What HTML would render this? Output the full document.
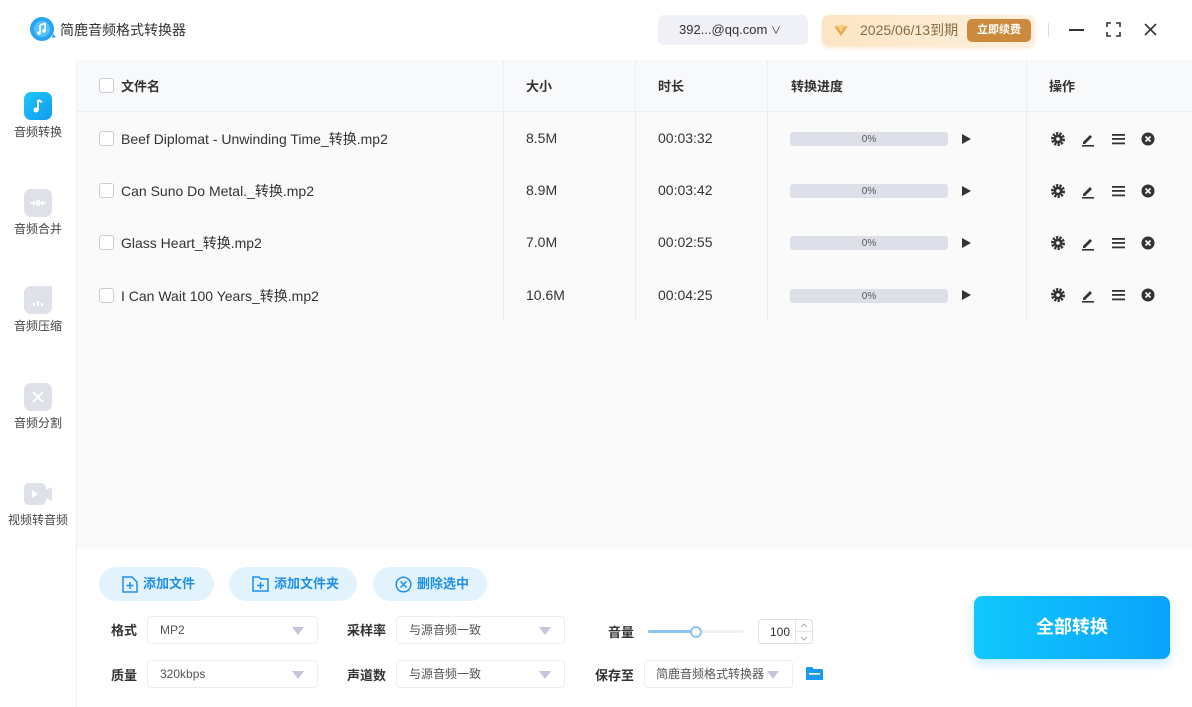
<!DOCTYPE html>
<html><head><meta charset="utf-8"><style>
*{box-sizing:border-box;margin:0;padding:0}
body{width:1192px;height:707px;overflow:hidden;background:#fff;font-family:"Liberation Sans","Noto Sans CJK SC",sans-serif;color:#333;position:relative}
.abs{position:absolute}
.top{left:0;top:0;width:1192px;height:60px;background:#fff}
.side{left:0;top:60px;width:77px;height:647px;background:#fff;border-right:1px solid #eef0f3}
.main{left:77px;top:60px;width:1115px;height:488px;background:#fafafb}
.nav{position:absolute;left:0;width:76px;text-align:center;font-size:12px;color:#444}
.nav .ic{width:28px;height:28px;border-radius:7px;background:#dfe1e8;margin:0 auto 3px}
.hdr{font-size:13px;font-weight:bold;color:#333}
.cb{width:15px;height:15px;border:1px solid #c9ccd3;border-radius:3px;background:#fff;position:absolute}
.row{font-size:14px;color:#333}
.vline{position:absolute;top:60px;height:262px;width:1px;background:#eceef2}
.bar{position:absolute;width:158px;height:14px;background:#dde0e8;border-radius:3px;font-size:10px;color:#555;text-align:center;line-height:15px}
.btn{position:absolute;top:567px;height:34px;border-radius:17px;background:#e3f3fe;color:#1e90e8;font-size:13px;font-weight:bold;line-height:34px}
.lab{position:absolute;font-size:13px;font-weight:bold;color:#333}
.sel{position:absolute;height:28px;border:1px solid #eceef2;border-radius:4px;background:#fff;font-size:12px;color:#555;line-height:26px;padding-left:12px}
.sel:after{content:"";position:absolute;right:13px;top:10px;border-left:6px solid transparent;border-right:6px solid transparent;border-top:8px solid #c6c5dd}
</style></head><body>
<div class="abs top"></div>
<svg class="abs" style="left:29px;top:16px" width="27" height="27" viewBox="0 0 27 27"><circle cx="13" cy="13" r="12" fill="#29a4f0"/><circle cx="13" cy="13" r="8" fill="#56c2fb"/><path d="M11 9v7.5M11 9l5-1.5v6.5" stroke="#fff" stroke-width="1.6" fill="none"/><circle cx="10" cy="17" r="1.8" fill="#fff"/><circle cx="15" cy="15" r="1.8" fill="#fff"/><path d="M24 18l3 3-4 1z" fill="#29a4f0"/></svg>
<div class="abs" style="left:60px;top:20px;font-size:14px;color:#333">简鹿音频格式转换器</div>
<div class="abs" style="left:658px;top:15px;width:150px;height:30px;background:#eff1f6;border-radius:6px;font-size:13px;line-height:30px;padding-left:21px;color:#333">392...@qq.com <span style="font-size:10px">&#8744;</span></div>
<div class="abs" style="left:822px;top:15px;width:213px;height:31px;background:linear-gradient(90deg,#fde5c3,#fdf0de);border-radius:7px;box-shadow:0 2px 4px #fbe7cb"></div>
<svg class="abs" style="left:833px;top:23px" width="16" height="15"><path d="M1 3l7 10 7-10-4 1-3 5-3-5z" fill="#e9a54a"/><path d="M3 2l5 6 5-6" fill="#f7cf7e"/></svg>
<div class="abs" style="left:860px;top:20px;font-size:14px;color:#8b6a43">2025/06/13到期</div>
<div class="abs" style="left:967px;top:19px;width:64px;height:23px;background:#cc8a3e;border-radius:5px;color:#fff;font-size:11px;font-weight:bold;text-align:center;line-height:23px">立即续费</div>
<div class="abs" style="left:1048px;top:23px;width:1px;height:14px;background:#ddd"></div>
<div class="abs" style="left:1069px;top:29px;width:15px;height:1.5px;background:#333"></div>
<svg class="abs" style="left:1106px;top:22px" width="15" height="15" fill="none" stroke="#333" stroke-width="1.6"><path d="M1 5V1h4M10 1h4v4M14 10v4h-4M5 14H1v-4"/></svg>
<svg class="abs" style="left:1144px;top:23px" width="13" height="13" stroke="#333" stroke-width="1.6"><path d="M1 1l11 11M12 1L1 12"/></svg>

<div class="abs side"></div>
<div class="nav" style="top:92px"><div class="ic" style="background:linear-gradient(135deg,#1fc7fb,#129af0)"><svg width="28" height="28"><path d="M14 8v10" stroke="#fff" stroke-width="2"/><path d="M14 8l4 2" stroke="#fff" stroke-width="2"/><circle cx="12" cy="18" r="2.5" fill="#fff"/></svg></div>音频转换</div>
<div class="nav" style="top:189px"><div class="ic"><svg width="28" height="28" stroke="#fff" stroke-width="1.6" fill="none"><path d="M13 11v6M15 11v6M6 14h5M9 12l2 2-2 2M22 14h-5M19 12l-2 2 2 2"/></svg></div>音频合并</div>
<div class="nav" style="top:286px"><div class="ic" style="border-radius:7px 2px 7px 7px"><svg width="28" height="28" stroke="#fff" stroke-width="2"><path d="M10 17v3M14 15v5M18 17v3"/></svg></div>音频压缩</div>
<div class="nav" style="top:383px"><div class="ic"><svg width="28" height="28" stroke="#fff" stroke-width="2" fill="none"><path d="M9 9l10 10M19 9L9 19"/></svg></div>音频分割</div>
<div class="nav" style="top:480px"><div class="ic" style="background:none"><svg width="28" height="28"><rect x="0" y="3" width="22" height="22" rx="5" fill="#dfe1e8"/><path d="M20 11l8-4v14l-8-4z" fill="#dfe1e8"/><path d="M8 10l6 4-6 4z" fill="#fff"/></svg></div>视频转音频</div>

<div class="abs main"></div>
<div class="abs" style="left:77px;top:60px;width:1115px;height:52px;background:#f8f9fb;border-bottom:1px solid #eceef2"></div>
<div class="vline" style="left:503px"></div><div class="vline" style="left:635px"></div><div class="vline" style="left:767px"></div><div class="vline" style="left:1026px"></div>
<div class="cb" style="left:99px;top:78px"></div>
<div class="abs hdr" style="left:121px;top:76px">文件名</div>
<div class="abs hdr" style="left:526px;top:76px">大小</div>
<div class="abs hdr" style="left:658px;top:76px">时长</div>
<div class="abs hdr" style="left:791px;top:76px">转换进度</div>
<div class="abs hdr" style="left:1049px;top:76px">操作</div>

<div class="cb" style="left:99px;top:131px"></div><div class="abs row" style="left:121px;top:129px">Beef Diplomat - Unwinding Time_转换.mp2</div><div class="abs row" style="left:526px;top:130px">8.5M</div><div class="abs row" style="left:658px;top:130px">00:03:32</div><div class="bar" style="left:790px;top:132px">0%</div>
<div class="cb" style="left:99px;top:183px"></div><div class="abs row" style="left:121px;top:181px">Can Suno Do Metal._转换.mp2</div><div class="abs row" style="left:526px;top:182px">8.9M</div><div class="abs row" style="left:658px;top:182px">00:03:42</div><div class="bar" style="left:790px;top:184px">0%</div>
<div class="cb" style="left:99px;top:235px"></div><div class="abs row" style="left:121px;top:233px">Glass Heart_转换.mp2</div><div class="abs row" style="left:526px;top:234px">7.0M</div><div class="abs row" style="left:658px;top:234px">00:02:55</div><div class="bar" style="left:790px;top:236px">0%</div>
<div class="cb" style="left:99px;top:288px"></div><div class="abs row" style="left:121px;top:286px">I Can Wait 100 Years_转换.mp2</div><div class="abs row" style="left:526px;top:287px">10.6M</div><div class="abs row" style="left:658px;top:287px">00:04:25</div><div class="bar" style="left:790px;top:289px">0%</div>

<svg class="abs" style="left:0;top:0" width="1192" height="330">
<defs><g id="ops" fill="#333">
<path d="M0 -5 l9 5 -9 5z" transform="translate(962,0)"/>
<circle cx="1058" cy="0" r="5.5" fill="none" stroke="#333" stroke-width="3" stroke-dasharray="2.2 1.2"/><circle cx="1058" cy="0" r="4.5"/><circle cx="1058" cy="0" r="1.8" fill="#fff"/>
<path d="M1083 3l7-7 2 2-7 7h-2z"/><rect x="1082" y="6" width="12" height="1.6"/>
<rect x="1112" y="-5" width="13" height="1.8"/><rect x="1112" y="-1" width="13" height="1.8"/><rect x="1112" y="3.5" width="13" height="1.8"/>
<circle cx="1148" cy="0" r="6.5"/><path d="M1145.5 -2.5l5 5M1150.5 -2.5l-5 5" stroke="#fff" stroke-width="1.6"/>
</g></defs>
<use href="#ops" y="139"/><use href="#ops" y="191"/><use href="#ops" y="243"/><use href="#ops" y="295"/>
</svg>

<div class="abs" style="left:77px;top:548px;width:1115px;height:159px;background:#fff"></div>
<div class="btn" style="left:99px;width:115px;padding-left:23px"><svg class="abs" style="left:23px;top:9px" width="16" height="17" fill="none" stroke="#1e90e8" stroke-width="1.5"><path d="M1 1h9l5 5v10H1zM8 6v7M4.5 9.5h7"/></svg><span style="margin-left:21px">添加文件</span></div>
<div class="btn" style="left:229px;width:128px"><svg class="abs" style="left:23px;top:9px" width="17" height="16" fill="none" stroke="#1e90e8" stroke-width="1.5"><path d="M1 1h6l2 2h7v12H1zM8.5 6v7M5 9.5h7"/></svg><span style="margin-left:45px">添加文件夹</span></div>
<div class="btn" style="left:373px;width:114px"><svg class="abs" style="left:22px;top:9px" width="17" height="17" fill="none" stroke="#1e90e8" stroke-width="1.5"><circle cx="8.5" cy="8.5" r="7.3"/><path d="M5.5 5.5l6 6M11.5 5.5l-6 6"/></svg><span style="margin-left:44px">删除选中</span></div>

<div class="lab" style="left:111px;top:620px">格式</div><div class="sel" style="left:147px;top:616px;width:171px">MP2</div>
<div class="lab" style="left:111px;top:665px">质量</div><div class="sel" style="left:147px;top:660px;width:171px">320kbps</div>
<div class="lab" style="left:347px;top:620px">采样率</div><div class="sel" style="left:396px;top:616px;width:169px">与源音频一致</div>
<div class="lab" style="left:347px;top:665px">声道数</div><div class="sel" style="left:396px;top:660px;width:169px">与源音频一致</div>
<div class="lab" style="left:608px;top:622px">音量</div>
<div class="abs" style="left:648px;top:630px;width:96px;height:3px;background:#eef0f3;border-radius:2px"></div>
<div class="abs" style="left:648px;top:630px;width:48px;height:3px;background:#8fc3f6;border-radius:2px"></div>
<div class="abs" style="left:690px;top:626px;width:12px;height:12px;border:2px solid #8fc3f6;border-radius:50%;background:#fff"></div>
<div class="abs" style="left:758px;top:619px;width:55px;height:25px;border:1px solid #dcdfe5;border-radius:4px;background:#fff;font-size:12px;line-height:25px;padding-left:11px">100</div>
<div class="abs" style="left:795px;top:620px;width:1px;height:23px;background:#e3e5ea"></div>
<div class="abs" style="left:795px;top:631px;width:17px;height:1px;background:#e3e5ea"></div>
<svg class="abs" style="left:800px;top:622px" width="8" height="20" fill="none" stroke="#999" stroke-width="0.8"><path d="M1 5l3-3 3 3M1 15l3 3 3-3"/></svg>
<div class="lab" style="left:595px;top:665px">保存至</div><div class="sel" style="left:644px;top:660px;width:149px;padding-left:11px;font-size:12px">简鹿音频格式转换器</div>
<svg class="abs" style="left:806px;top:666px" width="17" height="15"><path d="M0 2a1 1 0 0 1 1-1h5l2 2h8a1 1 0 0 1 1 1v10H0z" fill="#1b9bf0"/><rect x="3" y="7" width="11" height="1.6" fill="#fff"/></svg>
<div class="abs" style="left:974px;top:596px;width:196px;height:63px;border-radius:8px;background:linear-gradient(90deg,#10c8fc,#0aa3fb);box-shadow:0 5px 10px rgba(20,170,250,.25);color:#fff;font-size:18px;font-weight:bold;text-align:center;line-height:63px">全部转换</div>
</body></html>
